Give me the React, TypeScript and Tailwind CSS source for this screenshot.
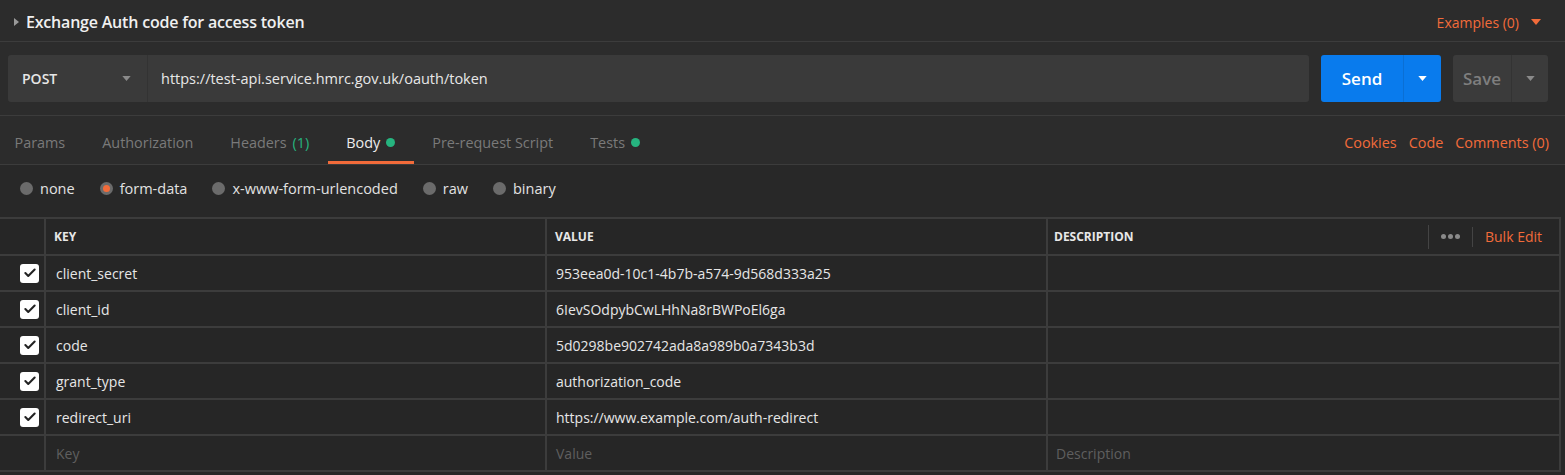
import { Check } from 'lucide-react';

const rows = [
  { key: 'client_secret', value: '953eea0d-10c1-4b7b-a574-9d568d333a25' },
  { key: 'client_id', value: '6IevSOdpybCwLHhNa8rBWPoEl6ga' },
  { key: 'code', value: '5d0298be902742ada8a989b0a7343b3d' },
  { key: 'grant_type', value: 'authorization_code' },
  { key: 'redirect_uri', value: 'https://www.example.com/auth-redirect' },
];

const tabs = [
  { label: 'Params' },
  { label: 'Authorization' },
  { label: 'Headers', count: '(1)' },
  { label: 'Body', dot: true, active: true },
  { label: 'Pre-request Script' },
  { label: 'Tests', dot: true },
];

const bodyModes = ['none', 'form-data', 'x-www-form-urlencoded', 'raw', 'binary'];

function Caret({ className }: { className: string }) {
  return (
    <svg viewBox="0 0 10 6" className={className} fill="currentColor">
      <path d="M0 0h10L5 6z" />
    </svg>
  );
}

export default function App() {
  return (
    <div className="w-[1565px] h-[475px] bg-[#282828] text-[#d8d8d8] font-['Open_Sans',sans-serif] overflow-hidden">
      {/* Header */}
      <div className="h-[42px] flex items-center justify-between pt-[3px] pl-[14px] pr-[24px] bg-[#2c2c2c] border-b border-[#3c3c3c]">
        <div className="flex items-center gap-[7px]">
          <svg viewBox="0 0 5 8" className="w-[5px] h-[8px] text-[#9a9a9a]" fill="currentColor">
            <path d="M0 0l5 4-5 4z" />
          </svg>
          <h1 className="text-[16px] font-semibold text-[#f0f0f0] tracking-[-0.2px]">Exchange Auth code for access token</h1>
        </div>
        <div className="flex items-center gap-[12px] text-[#f26b3a] text-[14px]">
          <span>Examples (0)</span>
          <Caret className="w-[10px] h-[6px]" />
        </div>
      </div>

      {/* URL bar */}
      <div className="h-[74px] flex items-center gap-[12px] pl-[8px] pr-[17px] bg-[#2c2c2c] border-b border-[#3c3c3c]">
        <div className="flex flex-1 h-[47px] rounded-[3px] overflow-hidden">
          <div className="w-[140px] flex items-center justify-between pl-[14px] pr-[16px] bg-[#3a3a3a] border-r border-[#333333]">
            <span className="text-[14px] font-semibold text-[#e6e6e6]">POST</span>
            <Caret className="w-[9px] h-[5px] text-[#8a8a8a]" />
          </div>
          <div className="flex-1 flex items-center px-[13px] bg-[#3a3a3a] text-[14.5px] text-[#e8e8e8]">
            https://test-api.service.hmrc.gov.uk/oauth/token
          </div>
        </div>
        <div className="flex h-[47px] w-[120px] rounded-[3px] bg-[#097bed] overflow-hidden">
          <div className="w-[83px] flex items-center justify-center text-[17px] font-semibold text-white border-r border-[#0a6fd4]">Send</div>
          <div className="flex-1 flex items-center justify-center">
            <Caret className="w-[9px] h-[5px] text-white" />
          </div>
        </div>
        <div className="flex h-[47px] w-[95px] rounded-[3px] bg-[#3b3b3b] overflow-hidden">
          <div className="w-[59px] flex items-center justify-center text-[17px] font-semibold text-[#7f7f7f] border-r border-[#333333]">Save</div>
          <div className="flex-1 flex items-center justify-center">
            <Caret className="w-[9px] h-[5px] text-[#8a8a8a]" />
          </div>
        </div>
      </div>

      {/* Tabs */}
      <div className="h-[49px] flex items-stretch justify-between pr-[16px] bg-[#2c2c2c] border-b border-[#3c3c3c]">
        <div className="flex items-stretch -ml-[4px]">
          {tabs.map((tab) => (
            <div
              key={tab.label}
              className={`relative flex items-center gap-[6px] pt-[5px] px-[18.5px] text-[14.4px] ${tab.active ? 'text-[#ececec]' : 'text-[#7a7a7a]'}`}
            >
              <span>{tab.label}</span>
              {tab.count && <span className="text-[#26b47f]">{tab.count}</span>}
              {tab.dot && <span className="w-[9px] h-[9px] rounded-full bg-[#26b47f]" />}
              {tab.active && <span className="absolute left-0 right-0 bottom-0 h-[3px] bg-[#f26b3a]" />}
            </div>
          ))}
        </div>
        <div className="flex items-center gap-[12px] pt-[5px] text-[14.4px] text-[#f26b3a]">
          <span>Cookies</span>
          <span>Code</span>
          <span>Comments (0)</span>
        </div>
      </div>

      {/* Body modes */}
      <div className="h-[52px] flex items-center gap-[25px] pl-[20px] pb-[5px]">
        {bodyModes.map((mode) => (
          <label key={mode} className="flex items-center gap-[7px] text-[14.5px] text-[#e2e2e2]">
            <span className="w-[13px] h-[13px] rounded-full bg-[#6b6b6b] flex items-center justify-center">
              {mode === 'form-data' && <span className="w-[7px] h-[7px] rounded-full bg-[#f26b3a]" />}
            </span>
            {mode}
          </label>
        ))}
      </div>

      {/* Table */}
      <div className="mr-[4px] border-t-2 border-r-2 border-b-2 border-[#3c3c3c] bg-[#262626]">
        <div className="grid grid-cols-[46px_501px_501px_1fr] h-[37px] border-b-2 border-[#3c3c3c] text-[12px] font-bold text-[#e8e8e8]">
          <div className="border-r-2 border-[#3c3c3c]" />
          <div className="flex items-center pl-[8px] border-r-2 border-[#3c3c3c]">KEY</div>
          <div className="flex items-center pl-[8px] border-r-2 border-[#3c3c3c]">VALUE</div>
          <div className="flex items-center justify-between pl-[6px]">
            <span>DESCRIPTION</span>
            <div className="flex items-center h-full">
              <span className="h-[24px] border-l border-[#444444]" />
              <span className="flex gap-[2px] px-[12px]">
                <span className="w-[5px] h-[5px] rounded-full bg-[#8a8a8a]" />
                <span className="w-[5px] h-[5px] rounded-full bg-[#8a8a8a]" />
                <span className="w-[5px] h-[5px] rounded-full bg-[#8a8a8a]" />
              </span>
              <span className="h-[20px] border-l border-[#444444]" />
              <span className="pl-[12px] pr-[17px] text-[14px] font-normal text-[#f26b3a]">Bulk Edit</span>
            </div>
          </div>
        </div>
        {rows.map((row) => (
          <div key={row.key} className="grid grid-cols-[46px_501px_501px_1fr] h-[36px] border-b-2 border-[#3c3c3c] text-[14px] text-[#e6e6e6]">
            <div className="flex items-center justify-end pr-[5px] border-r-2 border-[#3c3c3c]">
              <span className="w-[19px] h-[19px] rounded-[3px] bg-white flex items-center justify-center">
                <Check className="w-[14px] h-[14px] text-[#222222]" strokeWidth={3.5} />
              </span>
            </div>
            <div className="flex items-center pl-[10px] border-r-2 border-[#3c3c3c]">{row.key}</div>
            <div className="flex items-center pl-[9px] border-r-2 border-[#3c3c3c]">{row.value}</div>
            <div />
          </div>
        ))}
        <div className="grid grid-cols-[46px_501px_501px_1fr] h-[34px] text-[14px] text-[#5f5f5f]">
          <div className="border-r-2 border-[#3c3c3c]" />
          <div className="flex items-center pl-[10px] border-r-2 border-[#3c3c3c]">Key</div>
          <div className="flex items-center pl-[9px] border-r-2 border-[#3c3c3c]">Value</div>
          <div className="flex items-center pl-[8px]">Description</div>
        </div>
      </div>
    </div>
  );
}
